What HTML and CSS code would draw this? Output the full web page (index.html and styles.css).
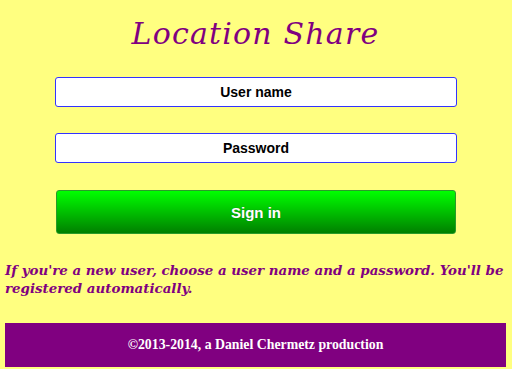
FILE: index.html
```html
<!DOCTYPE html>
<html>
<head>
<meta charset="utf-8">
<link rel="stylesheet" href="styles.css">
</head>
<body>
<div class="page">
  <h1 class="title">Location Share</h1>
  <form class="login">
    <div class="field">User name</div>
    <div class="field">Password</div>
    <button class="signin" type="button">Sign in</button>
  </form>
  <p class="note">If you're a new user, choose a user name and a password. You'll be registered automatically.</p>
  <footer class="footer">©2013-2014, a Daniel Chermetz production</footer>
</div>
</body>
</html>
```
FILE: styles.css
```css
html, body {
  margin: 0;
  padding: 0;
  background: #ffff80;
}
.page {
  padding: 0 6px 0 5px;
  display: flex;
  flex-direction: column;
}
.title {
  margin: 14px 0 0 0;
  height: 40px;
  line-height: 40px;
  text-align: center;
  font-family: "DejaVu Serif", serif;
  font-style: italic;
  font-weight: normal;
  font-size: 30px;
  letter-spacing: 1.2px;
  color: #800080;
}
.login {
  margin: 23px 0 0 0;
  padding: 0 49px 0 50px;
  display: flex;
  flex-direction: column;
}
.field {
  height: 28px;
  border: 1px solid #3333ff;
  border-radius: 3px;
  background: #fff;
  text-align: center;
  line-height: 28px;
  font-family: "Liberation Sans", Arial, sans-serif;
  font-weight: bold;
  font-size: 14px;
  color: #000;
  margin-bottom: 26px;
}
.field + .field {
  margin-bottom: 27px;
}
.signin {
  margin: 0 1px;
  height: 44px;
  border: 1px solid #2a9a2a;
  border-radius: 3px;
  background: linear-gradient(#00ff00, #008000);
  color: #fff;
  font-family: "Liberation Sans", Tahoma, sans-serif;
  font-weight: bold;
  font-size: 15px;
  padding-top: 2px;
  text-shadow: 0 0 1px #2a6a2a;
}
.note {
  margin: 27px 0 0 0;
  font-family: "DejaVu Serif", Georgia, serif;
  font-style: italic;
  font-weight: bold;
  font-size: 13.4px;
  line-height: 18px;
  color: #800080;
}
.footer {
  margin-top: 26px;
  height: 44px;
  line-height: 44px;
  background: #800080;
  color: #fff;
  text-align: center;
  font-family: "Liberation Serif", "Times New Roman", serif;
  font-weight: bold;
  font-size: 13.8px;
}
```
